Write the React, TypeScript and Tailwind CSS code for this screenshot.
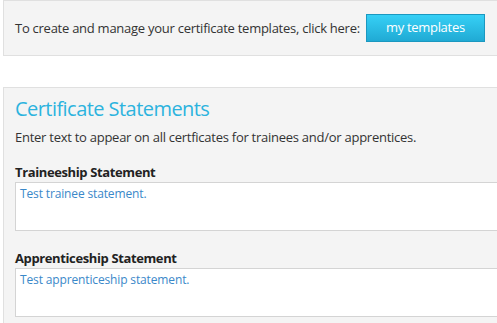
import React from 'react'

const statements = [
  { id: 'trainee', label: 'Traineeship Statement', value: 'Test trainee statement.', gap: 'mt-[17px]' },
  { id: 'apprentice', label: 'Apprenticeship Statement', value: 'Test apprenticeship statement.', gap: 'mt-[18px]' },
]

const App = () => {
  return (
    <div className="w-full overflow-hidden bg-white text-[#333] font-['Open_Sans',sans-serif]">
      <div className="w-[560px] pl-[3px]">
        {/* Templates bar */}
        <div className="flex h-[56px] items-center border border-[#e0e0e0] bg-[#f4f4f4] pl-[11px]">
          <span className="text-[13px] leading-[18px] tracking-[-0.26px]">
            To create and manage your certificate templates, click here:
          </span>
          <button className="ml-[6px] h-[28px] w-[119px] border border-[#1b98c0] bg-gradient-to-b from-[#36d0f6] to-[#20aad4] text-[13px] tracking-[-0.3px] text-white">
            my templates
          </button>
        </div>

        {/* Certificate statements */}
        <div className="mt-[31px] border border-[#e0e0e0] bg-[#f4f4f4] pl-[11px] pt-[9px] pb-[12px]">
          <h2 className="text-[20px] leading-[24px] tracking-[-0.55px] text-[#2cb3de]">Certificate Statements</h2>
          <p className="mt-[7px] text-[13px] leading-[18px] tracking-[-0.26px]">
            Enter text to appear on all certficates for trainees and/or apprentices.
          </p>
          {statements.map((s) => (
            <div key={s.id} className={s.gap}>
              <label htmlFor={s.id} className="block text-[13px] font-bold leading-[18px] tracking-[-0.38px] text-[#222]">
                {s.label}
              </label>
              <textarea
                id={s.id}
                defaultValue={s.value}
                className="mt-[1px] block h-[49px] w-full resize-none border border-[#d4d4d4] bg-white px-[4px] pt-[3px] text-[12px] leading-[16px] tracking-[-0.14px] text-[#3a88c9] outline-none"
              />
            </div>
          ))}
        </div>
      </div>
    </div>
  )
}

export default App
